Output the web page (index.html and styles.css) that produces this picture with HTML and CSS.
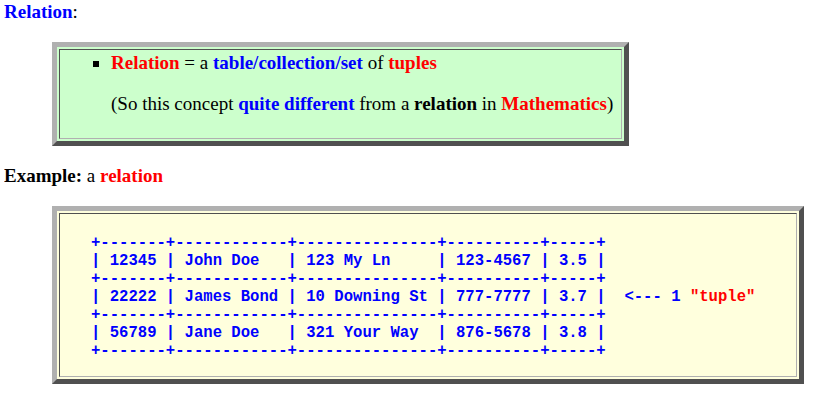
FILE: index.html
```html
<!DOCTYPE html>
<html>
<head>
    <title>Relation</title>
    <link rel="stylesheet" href="styles.css">
</head>
<body>
    <div class="heading"><b class="blue">Relation</b>:</div>

    <table class="box green">
        <tr>
            <td>
                <ul class="points">
                    <li>
                        <b class="red">Relation</b> = a <b class="blue">table/collection/set</b> of <b class="red">tuples</b>
                        <p>(So this concept <b class="blue">quite different</b> from a <b>relation</b> in <b class="red">Mathematics</b>)</p>
                    </li>
                </ul>
            </td>
        </tr>
    </table>

    <div class="heading"><b>Example:</b> a <b class="red">relation</b></div>

    <table class="box yellow">
        <tr>
            <td>
<pre class="relation">+-------+------------+---------------+----------+-----+
| 12345 | John Doe   | 123 My Ln     | 123-4567 | 3.5 |
+-------+------------+---------------+----------+-----+
| 22222 | James Bond | 10 Downing St | 777-7777 | 3.7 |  &lt;--- 1 <span class="red">"tuple"</span>
+-------+------------+---------------+----------+-----+
| 56789 | Jane Doe   | 321 Your Way  | 876-5678 | 3.8 |
+-------+------------+---------------+----------+-----+</pre>
            </td>
        </tr>
    </table>
</body>
</html>
```

FILE: styles.css
```css
body {
    margin: 0 4px;
    padding-top: 1px;
    font-family: "Liberation Serif", "Times New Roman", serif;
    font-size: 19px;
    line-height: 22px;
    color: #000;
    background: #fff;
}
.blue {
    color: #0000ff;
}
.red {
    color: #ff0000;
}
.heading {
    margin: 0;
}
.box {
    margin: 19px 0 19px 48px;
    border-collapse: separate;
    border-spacing: 2px;
    border: 5px solid;
    border-color: #b0b0b0 #505050 #505050 #b0b0b0;
}
.box td {
    padding: 2px;
    border: 1px solid;
    border-color: #505050 #b0b0b0 #b0b0b0 #505050;
}
.green {
    background: #ccffcc;
}
.yellow {
    background: #ffffdd;
}
.points {
    margin: 0;
    padding: 0 6px 21px 49px;
    list-style: square;
}
.points p {
    margin: 19px 0 0;
}
.relation {
    margin: 0;
    padding: 18px 39px 14px 29px;
    font-family: "Liberation Mono", "Courier New", monospace;
    font-size: 15.6px;
    line-height: 18px;
    font-weight: bold;
    color: #0000ff;
}
```
